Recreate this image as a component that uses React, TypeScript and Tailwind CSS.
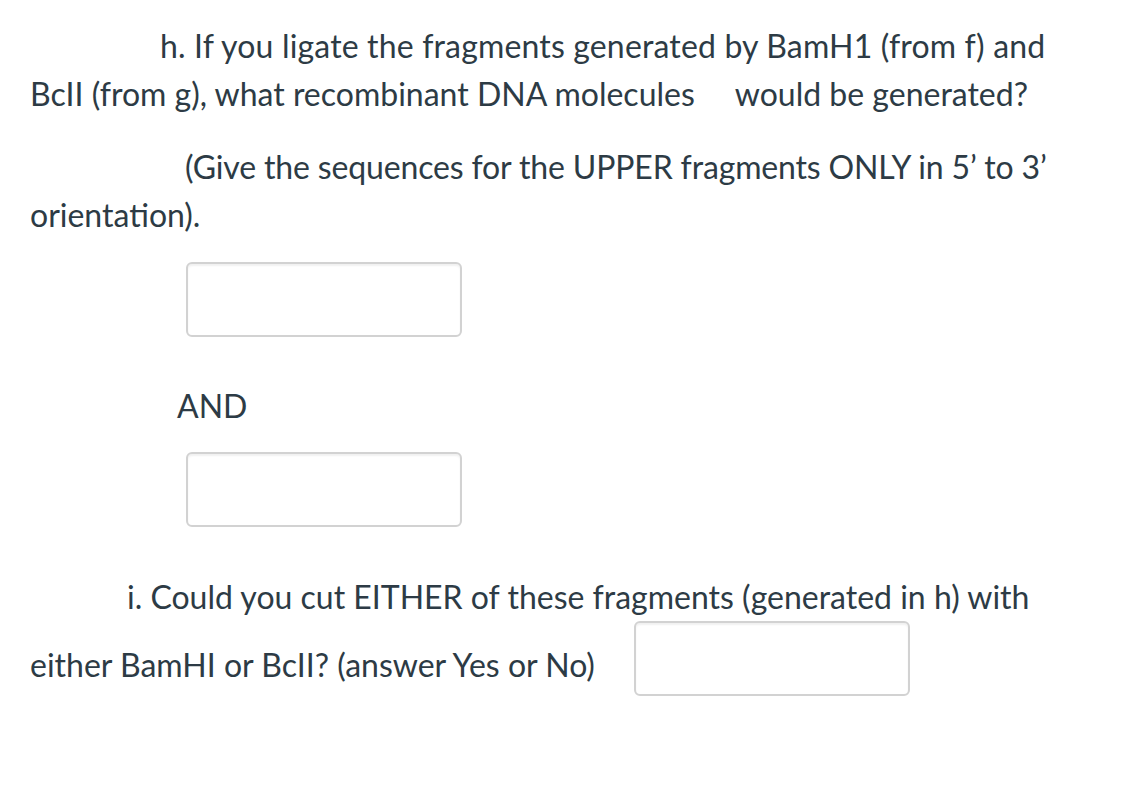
import React from 'react';

const AnswerBox = ({ className = '' }: { className?: string }) => (
  <input
    type="text"
    aria-label="answer"
    className={`block w-[276px] h-[75px] shrink-0 rounded-[6px] border-2 border-[#d2d2d2] bg-white shadow-[inset_0_2px_2px_rgba(0,0,0,0.06)] outline-none ${className}`}
  />
);

export default function App() {
  return (
    <div
      className="min-h-screen w-full bg-white pl-[30px] pr-4 pt-[22px] text-[32px] leading-[48px] text-[#2d3b45]"
      style={{ fontFamily: 'Lato, "Open Sans", sans-serif' }}
    >
      <p className="whitespace-nowrap">
        <span className="pl-[130px] tracking-[0.16px]">h. If you ligate the fragments generated by BamH1 (from f) and</span>
        <br />
        BcII (from g), what recombinant DNA molecules<span className="inline-block w-[40px]" />would be generated?
      </p>

      <p className="mt-[25px] whitespace-nowrap">
        <span className="pl-[155px] tracking-[-0.15px]">(Give the sequences for the UPPER fragments ONLY in 5’ to 3’</span>
        <br />
        orientation).
      </p>

      <AnswerBox className="ml-[156px] mt-[23px]" />

      <p className="ml-[147px] mt-[45px]">AND</p>

      <AnswerBox className="ml-[156px] mt-[22px]" />

      <p className="ml-[97px] mt-[46px] whitespace-nowrap">i. Could you cut EITHER of these fragments (generated in h) with</p>

      <div className="flex items-start">
        <span className="mt-[20px] whitespace-nowrap">either BamHI or BcII? (answer Yes or No)</span>
        <AnswerBox className="ml-[39px]" />
      </div>
    </div>
  );
}
